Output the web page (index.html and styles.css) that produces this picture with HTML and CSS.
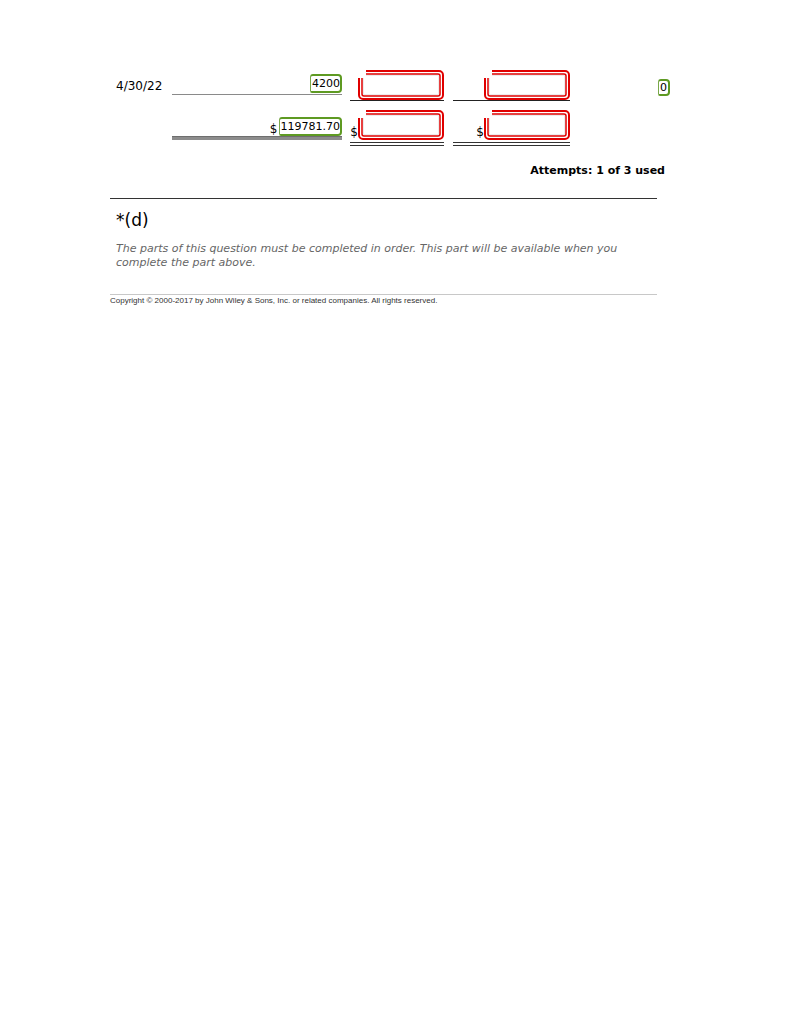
FILE: index.html
```html
<!DOCTYPE html>
<html>
<head>
<meta charset="utf-8">
<link rel="stylesheet" href="styles.css">
</head>
<body>
<div class="page">
  <div class="ledger">
    <div class="row row1">
      <div class="c-date">4/30/22</div>
      <div class="c-amt line-single"><span class="gbox">4200</span></div>
      <div class="c-sp"></div>
      <div class="c-red line-black">
        <svg class="rbox" width="86" height="30" viewBox="0 0 86 30"><rect x="1" y="1" width="84" height="28" rx="4" fill="#fff" stroke="#e00000" stroke-width="2"/><rect x="4" y="4" width="78" height="22" rx="2" fill="#fff" stroke="#e00000" stroke-width="1.5"/><rect x="5.5" y="5.5" width="75" height="19" fill="none" stroke="#ececec" stroke-width="1"/><rect x="0" y="0" width="8" height="8" fill="#fff"/></svg>
      </div>
      <div class="c-sp2"></div>
      <div class="c-red2 line-black">
        <svg class="rbox" width="86" height="30" viewBox="0 0 86 30"><rect x="1" y="1" width="84" height="28" rx="4" fill="#fff" stroke="#e00000" stroke-width="2"/><rect x="4" y="4" width="78" height="22" rx="2" fill="#fff" stroke="#e00000" stroke-width="1.5"/><rect x="5.5" y="5.5" width="75" height="19" fill="none" stroke="#ececec" stroke-width="1"/><rect x="0" y="0" width="8" height="8" fill="#fff"/></svg>
      </div>
      <div class="c-last"><span class="gbox small">0</span></div>
    </div>
    <div class="row row2">
      <div class="c-date"></div>
      <div class="c-amt line-thick"><span class="dollar">$</span><span class="gbox">119781.70</span></div>
      <div class="c-sp"></div>
      <div class="c-red line-double"><span class="dollar">$</span>
        <svg class="rbox" width="86" height="30" viewBox="0 0 86 30"><rect x="1" y="1" width="84" height="28" rx="4" fill="#fff" stroke="#e00000" stroke-width="2"/><rect x="4" y="4" width="78" height="22" rx="2" fill="#fff" stroke="#e00000" stroke-width="1.5"/><rect x="5.5" y="5.5" width="75" height="19" fill="none" stroke="#ececec" stroke-width="1"/><rect x="0" y="0" width="8" height="8" fill="#fff"/></svg>
      </div>
      <div class="c-sp2"></div>
      <div class="c-red2 line-double"><span class="dollar">$</span>
        <svg class="rbox" width="86" height="30" viewBox="0 0 86 30"><rect x="1" y="1" width="84" height="28" rx="4" fill="#fff" stroke="#e00000" stroke-width="2"/><rect x="4" y="4" width="78" height="22" rx="2" fill="#fff" stroke="#e00000" stroke-width="1.5"/><rect x="5.5" y="5.5" width="75" height="19" fill="none" stroke="#ececec" stroke-width="1"/><rect x="0" y="0" width="8" height="8" fill="#fff"/></svg>
      </div>
      <div class="c-last"></div>
    </div>
  </div>
  <div class="attempts">Attempts: 1 of 3 used</div>
  <div class="part">
    <div class="part-title">*(d)</div>
    <p class="part-note">The parts of this question must be completed in order. This part will be available when you complete the part above.</p>
  </div>
  <div class="copyright">Copyright © 2000-2017 by John Wiley &amp; Sons, Inc. or related companies. All rights reserved.</div>
</div>
</body>
</html>
```
FILE: styles.css
```css
html, body {
  margin: 0;
  padding: 0;
  background: #fff;
}
body {
  font-family: "DejaVu Sans", Verdana, sans-serif;
  color: #000;
}
.page {
  padding: 70px 0 0 110px;
  width: 560px;
}
.ledger {
  display: flex;
  flex-direction: column;
  gap: 7px;
}
.row {
  display: grid;
  grid-template-columns: 62px 170px 8px 94px 9px 117px 100px;
  align-items: end;
}
.row1 { height: 31px; }
.row2 { height: 38px; }
.c-date {
  font-size: 12px;
  padding-left: 6px;
  align-self: start;
  padding-top: 9px;
}
.c-amt {
  display: flex;
  justify-content: flex-end;
  align-items: flex-end;
  align-self: start;
}
.row1 .c-amt { height: 24px; }
.row2 .c-amt { height: 29px; }
.line-single { border-bottom: 1px solid #8a8a8a; }
.line-thick { border-bottom: 3px solid #8c8c8c; box-shadow: inset 0 -1px 0 #6e6e6e; }
.line-black { border-bottom: 1px solid #222; }
.line-double { border-bottom: 4px double #333; }
.c-red, .c-red2 {
  display: flex;
  justify-content: flex-end;
  align-items: flex-end;
  height: 100%;
  box-sizing: border-box;
}
.row2 .c-red, .row2 .c-red2 {
  padding-bottom: 2px;
}
.rbox { display: block; }
.dollar {
  font-size: 12px;
  line-height: 14px;
  margin-right: 1px;
  padding-bottom: 1px;
}
.row2 .c-red .dollar,
.row2 .c-red2 .dollar { margin-right: 0; }
.gbox {
  display: inline-block;
  font-size: 11px;
  line-height: 13px;
  padding: 1px 0 1px 1px;
  border: 2px solid #5e9a22;
  border-left: 1px solid #7aa84a;
  border-radius: 3px 4px 4px 2px;
  margin-bottom: 1px;
}
.c-last {
  display: flex;
  justify-content: flex-end;
  align-self: start;
  padding-top: 9px;
}
.gbox.small { padding: 0 1px; }
.attempts {
  font-size: 11px;
  font-weight: bold;
  text-align: right;
  margin-top: 18px;
  margin-right: -8px;
  width: 555px;
}
.part {
  margin-top: 21px;
  width: 547px;
  border-top: 1px solid #333;
  padding-left: 6px;
  box-sizing: border-box;
}
.part-title {
  font-size: 17px;
  margin-top: 11px;
  line-height: 20px;
}
.part-note {
  margin: 12px 0 0 0;
  font-size: 11px;
  line-height: 14px;
  font-style: italic;
  color: #666;
}
.copyright {
  margin-top: 24px;
  width: 547px;
  border-top: 1px solid #c8c8c8;
  padding-top: 1px;
  font-family: "Liberation Sans", Arial, sans-serif;
  font-size: 8px;
  color: #333;
}
```
